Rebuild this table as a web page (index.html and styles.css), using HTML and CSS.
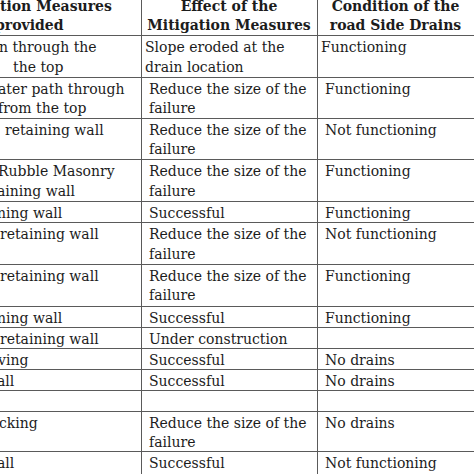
FILE: index.html
```html
<!DOCTYPE html>
<html>
<head>
<meta charset="utf-8">
<link rel="stylesheet" href="styles.css">
</head>
<body>
<div class="table">
  <div class="cell c1 head"><div class="ln m0">tion Measures</div><div class="ln m-5">provided</div></div>
  <div class="cell c2 head center"><div>Effect of the</div><div>Mitigation Measures</div></div>
  <div class="cell c3 head center"><div>Condition of the</div><div>road Side Drains</div></div>

  <div class="cell c1"><div class="ln m-1">n through the</div><div class="ln m13">the top</div></div>
  <div class="cell c2"><div>Slope eroded at the</div><div>drain location</div></div>
  <div class="cell c3"><div>Functioning</div></div>

  <div class="cell c1"><div class="ln m-2">ater path through</div><div class="ln m-2">from the top</div></div>
  <div class="cell c2 ind"><div>Reduce the size of the</div><div>failure</div></div>
  <div class="cell c3 ind"><div>Functioning</div></div>

  <div class="cell c1"><div class="ln m5">retaining wall</div></div>
  <div class="cell c2 ind"><div>Reduce the size of the</div><div>failure</div></div>
  <div class="cell c3 ind"><div>Not functioning</div></div>

  <div class="cell c1"><div class="ln m-2">Rubble Masonry</div><div class="ln m-3">aining wall</div></div>
  <div class="cell c2 ind"><div>Reduce the size of the</div><div>failure</div></div>
  <div class="cell c3 ind"><div>Functioning</div></div>

  <div class="cell c1"><div class="ln m-3">ning wall</div></div>
  <div class="cell c2 ind"><div>Successful</div></div>
  <div class="cell c3 ind"><div>Functioning</div></div>

  <div class="cell c1"><div class="ln m0">retaining wall</div></div>
  <div class="cell c2 ind"><div>Reduce the size of the</div><div>failure</div></div>
  <div class="cell c3 ind"><div>Not functioning</div></div>

  <div class="cell c1"><div class="ln m0">retaining wall</div></div>
  <div class="cell c2 ind"><div>Reduce the size of the</div><div>failure</div></div>
  <div class="cell c3 ind"><div>Functioning</div></div>

  <div class="cell c1"><div class="ln m-3">ning wall</div></div>
  <div class="cell c2 ind"><div>Successful</div></div>
  <div class="cell c3 ind"><div>Functioning</div></div>

  <div class="cell c1"><div class="ln m0">retaining wall</div></div>
  <div class="cell c2 ind"><div>Under construction</div></div>
  <div class="cell c3 ind"></div>

  <div class="cell c1"><div class="ln m-2">ving</div></div>
  <div class="cell c2 ind"><div>Successful</div></div>
  <div class="cell c3 ind"><div>No drains</div></div>

  <div class="cell c1"><div class="ln m-3">all</div></div>
  <div class="cell c2 ind"><div>Successful</div></div>
  <div class="cell c3 ind"><div>No drains</div></div>

  <div class="cell c1"></div>
  <div class="cell c2 ind"></div>
  <div class="cell c3 ind"></div>

  <div class="cell c1"><div class="ln m-1">cking</div></div>
  <div class="cell c2 ind"><div>Reduce the size of the</div><div>failure</div></div>
  <div class="cell c3 ind"><div>No drains</div></div>

  <div class="cell c1"><div class="ln m-3">all</div></div>
  <div class="cell c2 ind"><div>Successful</div></div>
  <div class="cell c3 ind"><div>Not functioning</div></div>
</div>
</body>
</html>
```
FILE: styles.css
```css
html, body {
  margin: 0;
  padding: 0;
  background: #ffffff;
  overflow: hidden;
}
.table {
  display: grid;
  grid-template-columns: 142px 176px 156px;
  grid-template-rows: 36px 41.7px 41.3px 41.5px 41.5px 21.3px 41.7px 41.7px 21px 21px 21px 21px 21px 40.6px 30px;
  width: 474px;
  height: 474px;
  overflow: hidden;
  font-family: "DejaVu Serif", "Liberation Serif", serif;
  font-size: 14px;
  line-height: 19.5px;
  color: #1c1c1c;
}
.cell {
  box-sizing: border-box;
  border-bottom: 1px solid #5a5a5a;
  padding: 2px 4px 0 3px;
  white-space: nowrap;
  min-width: 0;
}
.c1, .c2 {
  border-right: 1px solid #5a5a5a;
}
.c1 {
  padding-left: 0;
  padding-right: 0;
  overflow: hidden;
}
.ind {
  padding-left: 7px;
}
.head {
  display: flex;
  flex-direction: column;
  justify-content: flex-end;
  padding-top: 0;
  font-weight: bold;
  line-height: 19px;
}
.center {
  align-items: center;
}
.m0 { margin-left: 0; }
.m-1 { margin-left: -1px; }
.m-2 { margin-left: -2px; }
.m-3 { margin-left: -3px; }
.m-5 { margin-left: -5px; }
.m5 { margin-left: 5px; }
.m13 { margin-left: 13px; }
```
